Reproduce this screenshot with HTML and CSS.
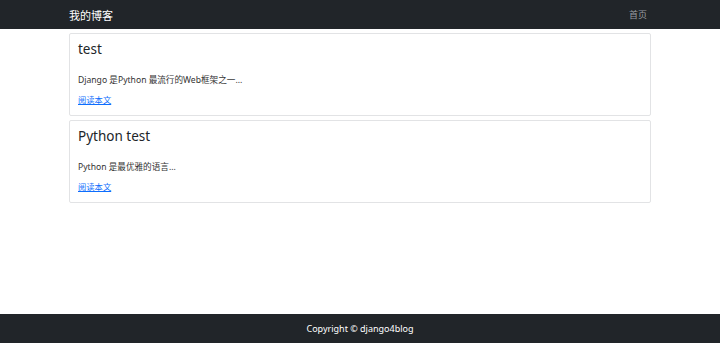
FILE: index.html
```html
<!DOCTYPE html>
<html lang="zh">
<head>
<meta charset="utf-8">
<title>我的博客</title>
<link rel="stylesheet" href="styles.css">
</head>
<body>
<div class="page">
  <nav class="navbar">
    <div class="container nav-inner">
      <a class="brand" href="#">我的博客</a>
      <a class="nav-link" href="#">首页</a>
    </div>
  </nav>
  <main class="container main">
    <div class="card">
      <h2 class="card-title">test</h2>
      <p class="card-text">Django 是Python 最流行的Web框架之一...</p>
      <a class="card-link" href="#">阅读本文</a>
    </div>
    <div class="card">
      <h2 class="card-title">Python test</h2>
      <p class="card-text">Python 是最优雅的语言...</p>
      <a class="card-link" href="#">阅读本文</a>
    </div>
  </main>
  <footer class="footer">Copyright © django4blog</footer>
</div>
</body>
</html>
```
FILE: styles.css
```css
html, body {
  margin: 0;
  padding: 0;
  height: 100%;
}
body {
  font-family: "Noto Sans", "Noto Sans CJK SC", sans-serif;
  color: #212529;
  background: #fff;
}
.page {
  min-height: 100%;
  display: flex;
  flex-direction: column;
}
.container {
  width: 582px;
  margin: 0 auto;
}
.navbar {
  background: #212529;
  height: 29px;
  display: flex;
  align-items: center;
}
.nav-inner {
  display: flex;
  justify-content: space-between;
  align-items: center;
}
.brand {
  color: #fff;
  text-decoration: none;
  font-size: 11px;
}
.nav-link {
  color: #9a9da1;
  text-decoration: none;
  font-size: 9px;
  margin-right: 4px;
}
.main {
  flex: 1;
  padding-top: 4px;
  display: flex;
  flex-direction: column;
  gap: 4px;
}
.card {
  box-sizing: border-box;
  border: 1px solid #e2e3e5;
  border-radius: 2px;
  padding: 7px 8px 0 8px;
  height: 83px;
}
.card-title {
  margin: 0;
  font-size: 13.5px;
  font-weight: 400;
  line-height: 17px;
  color: #212529;
}
.card-text {
  margin: 16px 0 0 0;
  font-size: 8.6px;
  line-height: 12px;
  color: #333;
}
.card-link {
  display: inline-block;
  margin-top: 8px;
  font-size: 8.3px;
  line-height: 12px;
  color: #0d6efd;
}
.footer {
  background: #212529;
  color: #fff;
  height: 29px;
  display: flex;
  align-items: center;
  justify-content: center;
  font-size: 9px;
}
```
